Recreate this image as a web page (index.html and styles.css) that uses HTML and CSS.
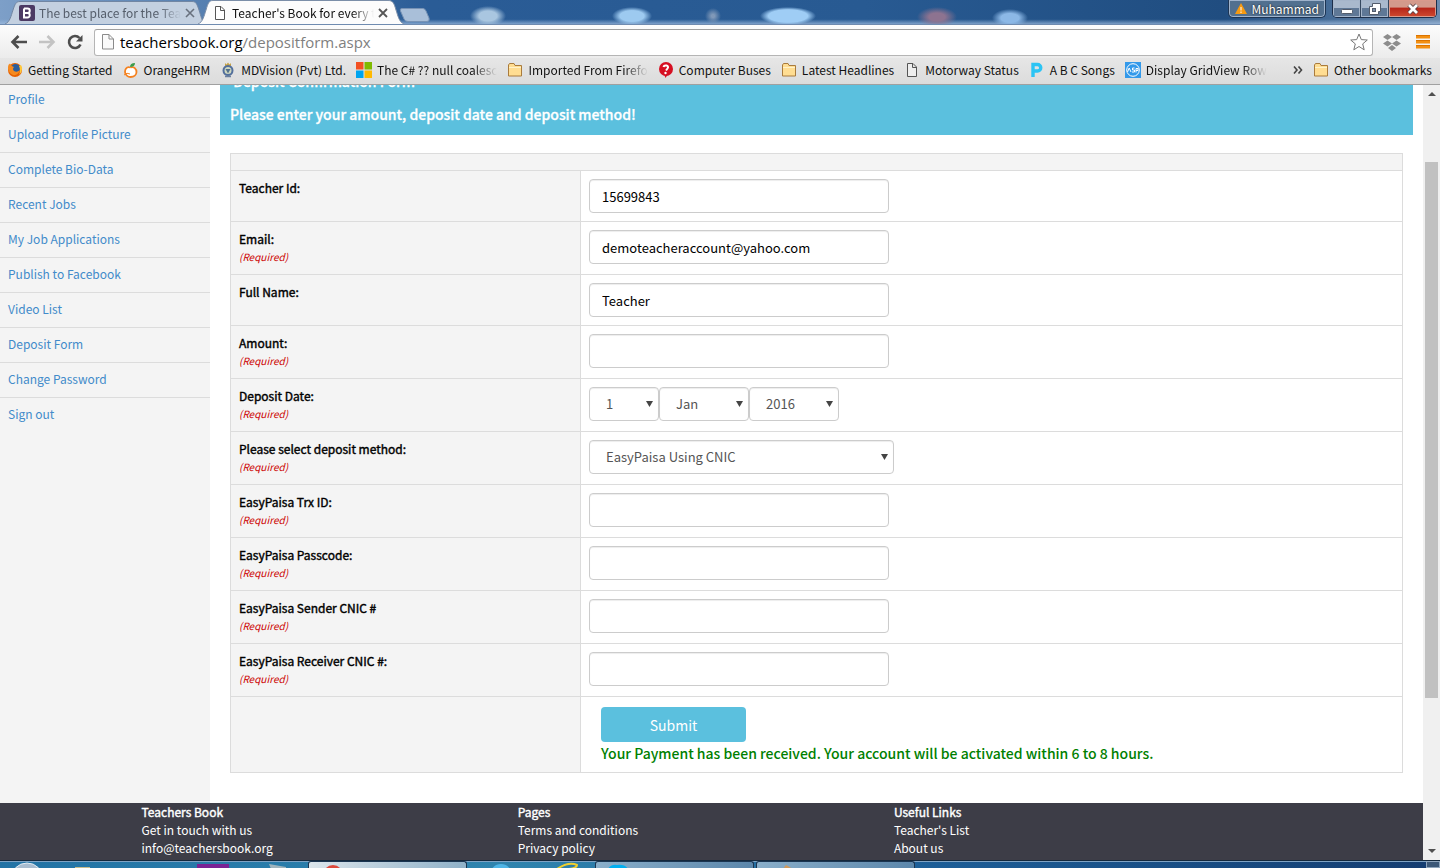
FILE: index.html
```html
<!DOCTYPE html>
<html lang="en">

<head>
    <meta charset="UTF-8">
    <meta name="viewport" content="width=device-width, initial-scale=1.0">
    <title>Teacher's Book for every teacher</title>
    <link rel="stylesheet" href="styles.css">
</head>

<body>
    <!-- Window title bar with tabs -->
    <header class="titlebar">
        <div class="tabs">
            <div class="tab">
                <svg class="tab-shape" viewBox="0 0 200 24" preserveAspectRatio="none" aria-hidden="true">
                    <path d="M0 24 C5 22 6 16 8 10 C10 4 11 1.500 15 1.500 H187 C191 1.500 192 4 194 10 C196 16 197 22 200 24" fill="#c3d0e0" stroke="#7186a3" />
                </svg>
                <svg class="favicon" viewBox="0 0 16 16" aria-hidden="true">
                    <rect width="16" height="16" rx="2" fill="#4c3a63" />
                    <path d="M5 3.500 H8.500 A2.200 2.200 0 0 1 8.500 8 H5 M8.500 8 A2.200 2.200 0 0 1 8.500 12.500 H5 V3.500" fill="none" stroke="#fff" stroke-width="2" />
                </svg>
                <span class="tab-title">The best place for the Tea</span>
                <button class="tab-close" aria-label="Close tab">
                    <svg viewBox="0 0 10 10"><path d="M1 1 L9 9 M9 1 L1 9" stroke="#68717e" stroke-width="1.600" /></svg>
                </button>
            </div>
            <div class="tab tab-active">
                <svg class="tab-shape" viewBox="0 0 206 24" preserveAspectRatio="none" aria-hidden="true">
                    <path d="M0 24 C5 22 6 16 8 10 C10 3 11 .500 15 .500 H190 C195 .500 196 3 198 10 C200 16 201 22 206 24" fill="#fcfcfc" stroke="#7b8ea8" />
                </svg>
                <svg class="favicon" viewBox="0 0 16 16" aria-hidden="true">
                    <path d="M3.500 1.500 H9 L12.500 5 V14.500 H3.500 Z M8.500 1.500 V5.500 H12.500" fill="#fff" stroke="#555" />
                </svg>
                <span class="tab-title">Teacher's Book for every t</span>
                <button class="tab-close" aria-label="Close tab">
                    <svg viewBox="0 0 10 10"><path d="M1 1 L9 9 M9 1 L1 9" stroke="#555" stroke-width="1.800" /></svg>
                </button>
            </div>
            <button class="new-tab" aria-label="New tab">
                <svg viewBox="0 0 32 16"><path d="M3 1.500 H24 Q26 1.500 27 4 L30 11 Q31 14.500 28 14.500 H9 Q6 14.500 5 12 L1.500 4 Q.500 1.500 3 1.500" fill="#a9bfd9" stroke="#7893b5" /></svg>
            </button>
        </div>
        <div class="window-controls">
            <button class="user-button">
                <svg viewBox="0 0 12 12" aria-hidden="true"><path d="M6 0 L12 11 H0 Z" fill="#f79a10" /><path d="M6 4 V7.500 M6 8.500 V10" stroke="#fff" /></svg>
                Muhammad
            </button>
            <div class="window-buttons">
                <button aria-label="Minimize"><svg viewBox="0 0 14 14"><rect x="1.500" y="7.500" width="11" height="4" rx="1" fill="#fff" stroke="#535c6b" /></svg></button>
                <button aria-label="Restore"><svg viewBox="0 0 14 14"><path d="M4.500 1.500 H12.500 V9.500 H10.500 V12.500 H1.500 V4.500 H4.500 Z" fill="#fff" stroke="#535c6b" /><rect x="4.500" y="6.500" width="3" height="3" fill="#7c8fa8" stroke="#535c6b" /></svg></button>
                <button class="window-close" aria-label="Close"><svg viewBox="0 0 14 14"><path d="M3 3 L11 11 M11 3 L3 11" stroke="#554044" stroke-width="4.500" /><path d="M3 3 L11 11 M11 3 L3 11" stroke="#fff" stroke-width="2.800" /></svg></button>
            </div>
        </div>
    </header>

    <!-- Toolbar -->
    <div class="toolbar">
        <button class="tool" aria-label="Back"><svg viewBox="0 0 18 16"><path d="M17 8 H3 M8.500 2 L2.500 8 L8.500 14" fill="none" stroke="#4d4d4d" stroke-width="2.600" /></svg></button>
        <button class="tool" aria-label="Forward"><svg viewBox="0 0 18 16"><path d="M1 8 H15 M9.500 2 L15.500 8 L9.500 14" fill="none" stroke="#c3c3c3" stroke-width="2.600" /></svg></button>
        <button class="tool" aria-label="Reload"><svg viewBox="0 0 18 16"><path d="M14.500 10.500 A6 6 0 1 1 13.500 4" fill="none" stroke="#4d4d4d" stroke-width="2.600" /><path d="M16.500 1 V7.500 H10 Z" fill="#4d4d4d" /></svg></button>
        <div class="omnibox">
            <svg class="page-icon" viewBox="0 0 14 16" aria-hidden="true"><path d="M1.500 .500 H8 L12.500 5 V15 H1.500 Z M8 .500 V5 H12.500" fill="#fafafa" stroke="#8b8b8b" /></svg>
            <span class="url"><span class="host">teachersbook.org</span>/depositform.aspx</span>
            <button class="star" aria-label="Bookmark this page"><svg viewBox="0 0 18 18"><path d="M9 1 L11.300 6.600 L17.300 7 L12.700 10.900 L14.200 16.800 L9 13.500 L3.800 16.800 L5.300 10.900 L.700 7 L6.700 6.600 Z" fill="#fff" stroke="#777" stroke-linejoin="round" /></svg></button>
        </div>
        <button class="tool" aria-label="Dropbox"><svg class="dropbox" viewBox="1 0 18 17"><path d="M5.500 0 L10 3 L5.500 6 L1 3 Z M14.500 0 L19 3 L14.500 6 L10 3 Z M5.500 6.500 L10 9.500 L5.500 12.500 L1 9.500 Z M14.500 6.500 L19 9.500 L14.500 12.500 L10 9.500 Z M10 11 L14 14 L10 17 L6 14 Z" fill="#8c8c8c" /></svg></button>
        <button class="tool menu" aria-label="Menu"><svg viewBox="0 0 14 14"><path d="M0 2 H14 M0 7 H14 M0 12 H14" stroke="#f39013" stroke-width="3" /><path d="M0 .500 H14 M0 5.500 H14 M0 10.500 H14" stroke="#dc7400" /></svg></button>
    </div>

    <!-- Bookmarks bar -->
    <nav class="bookmarks">
        <a href="#"><svg viewBox="0 0 16 16"><circle cx="8" cy="8" r="7" fill="#e66000" /><circle cx="8.500" cy="6.500" r="4.500" fill="#2a5d9d" /><path d="M1 5 Q1 2 3 1.500 Q4 4 7 5 Q5 7 7 9 Q10 11 13 8 Q11 14 6 13 Q1 11 1 5" fill="#f58a1f" /><path d="M14 3 Q17 8 12 13 Q14 8 12 4" fill="#ffc83a" /></svg><span>Getting Started</span></a>
        <a href="#"><svg viewBox="0 0 16 16"><path d="M7.500 5.500 C3 4 2 8 2 10 C2 13 5 15 7.500 15 C11 15 13.500 13 13.500 10 C13.500 7 11 4 7.500 5.500" fill="#fff" stroke="#f58220" stroke-width="1.800" /><path d="M7 5 Q7 1 12 1 Q12 5 7 5" fill="#3a9c4b" /><path d="M1 13 Q4 10 7 12" fill="none" stroke="#f58220" /></svg><span>OrangeHRM</span></a>
        <a href="#"><svg viewBox="0 0 16 16"><path d="M5 1 L6.500 2.500 L8 .500 L9.500 2.500 L11 1 V4 H5 Z" fill="#c7a243" /><circle cx="8" cy="8.500" r="4.500" fill="#cfd8c0" stroke="#536f9c" stroke-width="2" /><path d="M5.500 7 H10.500 L8 11.500 Z" fill="#53708e" /><path d="M5 14.500 H11" stroke="#6a7f9d" stroke-width="1.500" /></svg><span>MDVision (Pvt) Ltd.</span></a>
        <a href="#"><svg viewBox="0 0 16 16"><path d="M0 0 H7.500 V7.500 H0 Z" fill="#f25022" /><path d="M8.500 0 H16 V7.500 H8.500 Z" fill="#7fba00" /><path d="M0 8.500 H7.500 V16 H0 Z" fill="#00a4ef" /><path d="M8.500 8.500 H16 V16 H8.500 Z" fill="#ffb900" /></svg><span class="fade">The C# ?? null coalesc</span></a>
        <a href="#"><svg viewBox="0 0 16 16"><path d="M1.500 14 V3 L2.500 1.500 H7 L8 3.500 H14.500 V14 Z" fill="#ffdd92" stroke="#a97b3d" /><path d="M2 5.500 H14" stroke="#fff2c9" /></svg><span class="fade">Imported From Firefo</span></a>
        <a href="#"><svg viewBox="0 0 16 16"><circle cx="8" cy="7" r="7" fill="#d60f22" /><path d="M6 12 L7.500 16 L10 12" fill="#d60f22" /><path d="M5.500 5 Q6 3 8.500 3.500 Q11 4.500 9.500 6.500 L8 8.500" fill="none" stroke="#fff" stroke-width="2" /><circle cx="7.500" cy="11" r="1.200" fill="#fff" /></svg><span>Computer Buses</span></a>
        <a href="#"><svg viewBox="0 0 16 16"><path d="M1.500 14 V3 L2.500 1.500 H7 L8 3.500 H14.500 V14 Z" fill="#ffdd92" stroke="#a97b3d" /><path d="M2 5.500 H14" stroke="#fff2c9" /></svg><span>Latest Headlines</span></a>
        <a href="#"><svg viewBox="0 0 16 16"><path d="M3.500 1.500 H9 L12.500 5 V14.500 H3.500 Z M8.500 1.500 V5.500 H12.500" fill="#eee" stroke="#555" /></svg><span>Motorway Status</span></a>
        <a href="#"><svg viewBox="0 0 16 16"><path d="M4 15 V2.500 H8.500 A3.200 3.200 0 0 1 8.500 9 H5" fill="none" stroke="#2cc4f4" stroke-width="3.400" /></svg><span>A B C Songs</span></a>
        <a href="#"><svg viewBox="0 0 16 16"><rect width="16" height="16" fill="#3399ea" /><circle cx="8" cy="8" r="6.300" fill="none" stroke="#fff" /><path d="M2.500 10 L4.200 6 L6 10 M9.500 6 H7.500 V8 H9.500 V10 H7 M11 10.500 V6.500 H13 V8.500 H11" fill="none" stroke="#fff" /></svg><span class="fade">Display GridView Row</span></a>
        <button class="overflow" aria-label="More bookmarks"><svg viewBox="0 0 10 8"><path d="M1 .500 L4 4 L1 7.500 M5.500 .500 L8.500 4 L5.500 7.500" fill="none" stroke="#444" stroke-width="1.600" /></svg></button>
        <a class="other" href="#"><svg viewBox="0 0 16 16"><path d="M1.500 14 V3 L2.500 1.500 H7 L8 3.500 H14.500 V14 Z" fill="#ffdd92" stroke="#a97b3d" /><path d="M2 5.500 H14" stroke="#fff2c9" /></svg><span>Other bookmarks</span></a>
    </nav>

    <!-- Web page -->
    <div class="viewport">
        <div class="page">
            <div class="columns">
                <nav class="sidebar">
                    <ul>
                        <li><a href="#">Profile</a></li>
                        <li><a href="#">Upload Profile Picture</a></li>
                        <li><a href="#">Complete Bio-Data</a></li>
                        <li><a href="#">Recent Jobs</a></li>
                        <li><a href="#">My Job Applications</a></li>
                        <li><a href="#">Publish to Facebook</a></li>
                        <li><a href="#">Video List</a></li>
                        <li><a href="#">Deposit Form</a></li>
                        <li><a href="#">Change Password</a></li>
                        <li><a href="#">Sign out</a></li>
                    </ul>
                </nav>

                <main class="content">
                    <div class="banner">
                        <h1>&nbsp;Deposit Confirmation Form</h1>
                        <p>Please enter your amount, deposit date and deposit method!</p>
                    </div>

                    <form class="deposit">
                        <table>
                            <tr class="head-row">
                                <td colspan="2"></td>
                            </tr>
                            <tr>
                                <th><label for="teacherId">Teacher Id:</label></th>
                                <td><input type="text" id="teacherId" value="15699843"></td>
                            </tr>
                            <tr>
                                <th><label for="email">Email:</label><em>(Required)</em></th>
                                <td><input type="text" id="email" value="demoteacheraccount@yahoo.com"></td>
                            </tr>
                            <tr>
                                <th><label for="fullName">Full Name:</label></th>
                                <td><input type="text" id="fullName" value="Teacher"></td>
                            </tr>
                            <tr>
                                <th><label for="amount">Amount:</label><em>(Required)</em></th>
                                <td><input type="text" id="amount"></td>
                            </tr>
                            <tr>
                                <th><label for="day">Deposit Date:</label><em>(Required)</em></th>
                                <td>
                                    <div class="date">
                                        <select id="day" class="day"><option>1</option></select>
                                        <select aria-label="Month"><option>Jan</option></select>
                                        <select aria-label="Year"><option>2016</option></select>
                                    </div>
                                </td>
                            </tr>
                            <tr>
                                <th><label for="method">Please select deposit method:</label><em>(Required)</em></th>
                                <td><select id="method" class="method"><option>EasyPaisa Using CNIC</option></select></td>
                            </tr>
                            <tr>
                                <th><label for="trxId">EasyPaisa Trx ID:</label><em>(Required)</em></th>
                                <td><input type="text" id="trxId"></td>
                            </tr>
                            <tr>
                                <th><label for="passcode">EasyPaisa Passcode:</label><em>(Required)</em></th>
                                <td><input type="text" id="passcode"></td>
                            </tr>
                            <tr>
                                <th><label for="sender">EasyPaisa Sender CNIC #</label><em>(Required)</em></th>
                                <td><input type="text" id="sender"></td>
                            </tr>
                            <tr>
                                <th><label for="receiver">EasyPaisa Receiver CNIC #:</label><em>(Required)</em></th>
                                <td><input type="text" id="receiver"></td>
                            </tr>
                            <tr>
                                <th></th>
                                <td class="submit-cell">
                                    <button type="button" class="submit">Submit</button>
                                    <p class="message">Your Payment has been received. Your account will be activated within 6 to 8 hours.</p>
                                </td>
                            </tr>
                        </table>
                    </form>
                </main>
            </div>

            <footer class="footer">
                <div class="footer-inner">
                    <div>
                        <strong>Teachers Book</strong>
                        <a href="#">Get in touch with us</a>
                        <a href="#">info@teachersbook.org</a>
                    </div>
                    <div>
                        <strong>Pages</strong>
                        <a href="#">Terms and conditions</a>
                        <a href="#">Privacy policy</a>
                    </div>
                    <div>
                        <strong>Useful Links</strong>
                        <a href="#">Teacher's List</a>
                        <a href="#">About us</a>
                    </div>
                </div>
            </footer>
        </div>

        <!-- Scrollbar -->
        <div class="scrollbar">
            <span class="arrow-up"></span>
            <div class="track"><div class="thumb"></div></div>
            <span class="arrow-down"></span>
        </div>
    </div>

    <!-- Windows taskbar -->
    <div class="taskbar">
        <svg viewBox="0 0 308 8" aria-hidden="true">
            <circle cx="27" cy="18" r="16" fill="#a9bdd0" stroke="#e3edf5" />
            <path d="M75 8 V6 H90 V8 Z" fill="#c8bd8c" />
            <rect x="197" y="3" width="32" height="8" fill="#7a2394" />
            <path d="M269 3 L286 6 V8 H271 Z" fill="#9fb4bd" />
        </svg>
        <button class="task" aria-label="Chrome"><svg viewBox="0 0 24 7"><circle cx="12" cy="13" r="10" fill="#dd4a3c" /></svg></button>
        <svg class="task-gap" viewBox="0 0 126 8" aria-hidden="true">
            <circle cx="32" cy="14" r="11" fill="#4fb5e6" />
            <path d="M88 8 Q100 0 108 4 Q108 7 100 8" fill="none" stroke="#f0cf2d" stroke-width="2" />
        </svg>
        <button class="task" aria-label="Skype"><svg viewBox="0 0 24 7"><path d="M0 7 Q3 2 9 3 Q17 2 20 7" fill="#00aff0" /></svg></button>
        <button class="task" aria-label="Paint"><svg viewBox="0 0 24 7"><path d="M17 3 L24 7 H14 Z" fill="#d19a5c" /></svg></button>
        <span class="show-desktop"></span>
    </div>
</body>

</html>
```
FILE: styles.css
```css
* {
    box-sizing: border-box;
}

body {
    margin: 0;
    height: 100vh;
    display: flex;
    flex-direction: column;
    overflow: hidden;
    font-family: "Noto Sans CJK SC", sans-serif;
    font-size: 12px;
    line-height: 18px;
    color: #000;
    background-color: #fff;
}

button {
    font-family: inherit;
    padding: 0;
    border: none;
    background: none;
    cursor: pointer;
}

a {
    text-decoration: none;
}

svg {
    display: block;
}

/* Title bar */
.titlebar {
    flex: none;
    display: flex;
    justify-content: space-between;
    align-items: flex-start;
    height: 25px;
    border-bottom: 1px solid #6f8bb0;
    background:
        radial-gradient(ellipse 18px 10px at 488px 16px, #a9c6e0 50%, transparent),
        radial-gradient(ellipse 20px 9px at 632px 16px, #9dcaf0 60%, transparent),
        radial-gradient(ellipse 8px 8px at 713px 16px, #7f98b8 20%, transparent),
        radial-gradient(ellipse 28px 9px at 788px 16px, #9fcdf5 70%, transparent),
        radial-gradient(ellipse 20px 10px at 937px 17px, #8d7390 40%, transparent),
        radial-gradient(ellipse 18px 9px at 1010px 18px, #8cb8e6 50%, transparent),
        linear-gradient(rgba(255, 255, 255, 0) 80%, rgba(160, 190, 225, .7)),
        linear-gradient(90deg, #7d9fc8, #2a5c96 30%, #285a92 60%, #204d80 85%, #6c8bae);
}

.tabs {
    display: flex;
    padding-left: 5px;
}

.tab {
    position: relative;
    display: flex;
    align-items: center;
    width: 200px;
    height: 24px;
    padding: 2px 10px 0 14px;
    margin-right: -7px;
    color: #555e6b;
}

.tab-active {
    width: 206px;
    color: #111;
}

.tab-shape {
    position: absolute;
    left: 0;
    top: 0;
    width: 100%;
    height: 100%;
}

.favicon {
    position: relative;
    flex: none;
    width: 16px;
    height: 16px;
}

.tab-title {
    position: relative;
    flex: none;
    width: 142px;
    margin-left: 4px;
    white-space: nowrap;
    -webkit-mask-image: linear-gradient(90deg, #000 85%, transparent);
    mask-image: linear-gradient(90deg, #000 85%, transparent);
}

.tab-close {
    position: relative;
    margin-left: 4px;
}

.tab-close svg {
    width: 10px;
    height: 10px;
}

.new-tab {
    margin: 5px 0 0 2px;
}

.new-tab svg {
    width: 32px;
    height: 16px;
}

.window-controls {
    display: flex;
    gap: 6px;
    padding-right: 3px;
}

.user-button {
    display: flex;
    align-items: center;
    gap: 5px;
    height: 18px;
    padding: 0 6px;
    border: 1px solid #1d3554;
    border-top: none;
    border-radius: 0 0 5px 5px;
    box-shadow: inset 0 0 0 1px #9fb3cc;
    background-color: #52708f;
    color: #fff;
    font-size: 12px;
    text-shadow: 0 0 2px #000;
}

.user-button svg {
    width: 12px;
    height: 12px;
}

.window-buttons {
    display: flex;
    height: 18px;
    border: 1px solid #1d2f4a;
    border-top: none;
    border-radius: 0 0 5px 5px;
    overflow: hidden;
}

.window-buttons button {
    display: flex;
    justify-content: center;
    align-items: center;
    width: 28px;
    border-right: 1px solid #35485f;
    box-shadow: inset 0 0 0 1px #a5b5ca;
    background: linear-gradient(#a9b9cd 45%, #5f7896 50%);
}

.window-buttons .window-close {
    width: 47px;
    border-right: none;
    box-shadow: inset 0 0 0 1px #d99a8c;
    background: linear-gradient(#d39a8c 40%, #b8281a 50%, #cf4a30);
}

.window-buttons svg {
    width: 14px;
    height: 14px;
}

/* Toolbar */
.toolbar {
    flex: none;
    display: flex;
    align-items: center;
    gap: 10px;
    height: 33px;
    padding: 1px 10px 0;
    background: linear-gradient(#fcfcfc, #ececec);
}

.tool svg {
    width: 18px;
    height: 16px;
}

.tool .dropbox {
    height: 17px;
}

.menu {
    margin-left: 5px;
}

.menu svg {
    width: 14px;
    height: 14px;
}

.omnibox {
    flex: 1;
    display: flex;
    align-items: center;
    height: 27px;
    padding: 0 4px 0 6px;
    border: 1px solid #b5b5b5;
    border-top-color: #9f9f9f;
    border-radius: 3px;
    background-color: #fff;
    font-family: "Open Sans", sans-serif;
    font-size: 15px;
    color: #808080;
}

.page-icon {
    width: 14px;
    height: 16px;
}

.url {
    flex: 1;
    margin-left: 5px;
}

.host {
    color: #000;
}

.star svg {
    width: 18px;
    height: 18px;
}

/* Bookmarks bar */
.bookmarks {
    flex: none;
    display: flex;
    align-items: center;
    gap: 10px;
    height: 27px;
    padding: 0 8px 2px 7px;
    border-bottom: 1px solid #a0a0a0;
    background: linear-gradient(#e6e6e6, #dcdcdc);
    white-space: nowrap;
}

.bookmarks a {
    display: flex;
    align-items: center;
    gap: 5px;
    color: #111;
}

.bookmarks a svg {
    flex: none;
    width: 16px;
    height: 16px;
}

.fade {
    -webkit-mask-image: linear-gradient(90deg, #000 80%, transparent);
    mask-image: linear-gradient(90deg, #000 80%, transparent);
}

.overflow {
    margin-left: auto;
}

.overflow svg {
    width: 10px;
    height: 8px;
}

/* Page viewport */
.viewport {
    flex: 1;
    display: flex;
    min-height: 0;
    overflow: hidden;
}

.page {
    flex: 1;
    margin-top: -37px;
}

.columns {
    display: flex;
}

/* Sidebar */
.sidebar {
    width: 210px;
    padding-top: 35px;
    background-color: #f4f4f4;
}

.sidebar ul {
    list-style: none;
    margin: 0;
    padding: 0;
}

.sidebar li {
    border-bottom: 1px solid #dcdcdc;
}

.sidebar li:last-child {
    border-bottom: none;
}

.sidebar a {
    display: block;
    padding: 7px 8px 9px;
    color: #428bca;
}

/* Content */
.content {
    flex: 1;
    padding: 0 10px 30px;
}

.banner {
    padding: 23px 10px 11px;
    background-color: #5bc0de;
    color: #fff;
}

.banner h1,
.banner p {
    margin: 0;
    font-size: 14px;
    font-weight: 500;
    line-height: 20px;
    -webkit-text-stroke: 0.3px;
}

.banner h1 {
    margin-bottom: 13px;
}

.deposit {
    padding: 18px 10px 0;
}

table {
    width: 100%;
    border-collapse: collapse;
}

td,
th {
    padding: 8px;
    border: 1px solid #dcdcdc;
    text-align: left;
    vertical-align: top;
}

th {
    width: 350px;
    background-color: #f4f4f4;
    font-weight: 400;
}

th label,
th em {
    display: block;
}

th label {
    -webkit-text-stroke: 0.4px;
}

th em {
    font-size: 10px;
    color: #c00;
}

.head-row td {
    background-color: #f4f4f4;
}

input,
select {
    display: block;
    width: 300px;
    height: 34px;
    padding: 6px 12px;
    border: 1px solid #ccc;
    border-radius: 4px;
    box-shadow: inset 0 1px 1px rgba(0, 0, 0, .075);
    background-color: #fff;
    font-family: inherit;
    font-size: 13px;
    line-height: 20px;
    color: #000;
}

select {
    width: 90px;
    padding: 6px 16px;
    appearance: none;
    background-image: url("data:image/svg+xml,%3Csvg xmlns='http://www.w3.org/2000/svg' width='7' height='6'%3E%3Cpath d='M0 0h7L3.5 6z' fill='%23444'/%3E%3C/svg%3E");
    background-repeat: no-repeat;
    background-position: right 5px top 13px;
    color: #555;
}

.date {
    display: flex;
}

.day {
    width: 70px;
}

.method {
    width: 305px;
}

.submit-cell {
    padding: 10px 20px 7px;
}

.submit {
    display: block;
    width: 145px;
    height: 35px;
    border-radius: 4px;
    background-color: #5bc0de;
    color: #fff;
    font-size: 14px;
}

.message {
    margin: 0;
    font-size: 14px;
    font-weight: 500;
    line-height: 23px;
    color: #008000;
}

/* Footer */
.footer {
    background-color: #3d3d47;
    color: #fff;
}

.footer-inner {
    display: flex;
    max-width: 1140px;
    height: 80px;
    margin: 0 auto;
}

.footer-inner div {
    width: 33%;
}

.footer strong,
.footer a {
    display: block;
    color: #fff;
    font-weight: 400;
}

.footer strong {
    -webkit-text-stroke: 0.4px;
}

/* Scrollbar */
.scrollbar {
    flex: none;
    display: flex;
    flex-direction: column;
    align-items: center;
    width: 17px;
    padding: 7px 2px;
    background-color: #f0f0f0;
}

.arrow-up,
.arrow-down {
    border: 4px solid transparent;
}

.arrow-up {
    border-top: none;
    border-bottom-color: #505050;
}

.arrow-down {
    border-bottom: none;
    border-top-color: #505050;
}

.track {
    flex: 1;
    width: 100%;
    padding-top: 66px;
}

.thumb {
    height: 78%;
    background-color: #c1c1c1;
}

/* Taskbar */
.taskbar {
    flex: none;
    display: flex;
    height: 8px;
    border-top: 1px solid #14283c;
    box-shadow: inset 0 1px 0 #7fa3c4;
    background: linear-gradient(90deg, #2273a5, #2f84ae 35%, #1d5e97 65%, #143c70);
    overflow: hidden;
}

.taskbar > svg {
    flex: none;
    width: 308px;
    height: 8px;
}

.taskbar .task-gap {
    width: 126px;
}

.task {
    width: 159px;
    margin-right: 2px;
    padding-left: 12px;
    border: 1px solid #1b3551;
    border-bottom: none;
    border-radius: 3px 3px 0 0;
    background: linear-gradient(90deg, #dce6ec, #8fb1c8);
}

.task ~ .task {
    background: linear-gradient(90deg, #8aafca, #5c87ab);
}

.task svg {
    width: 24px;
    height: 7px;
}

.show-desktop {
    width: 14px;
    margin-left: auto;
    border: 1px solid #8fa5bd;
    background-color: #3c5878;
}
```
